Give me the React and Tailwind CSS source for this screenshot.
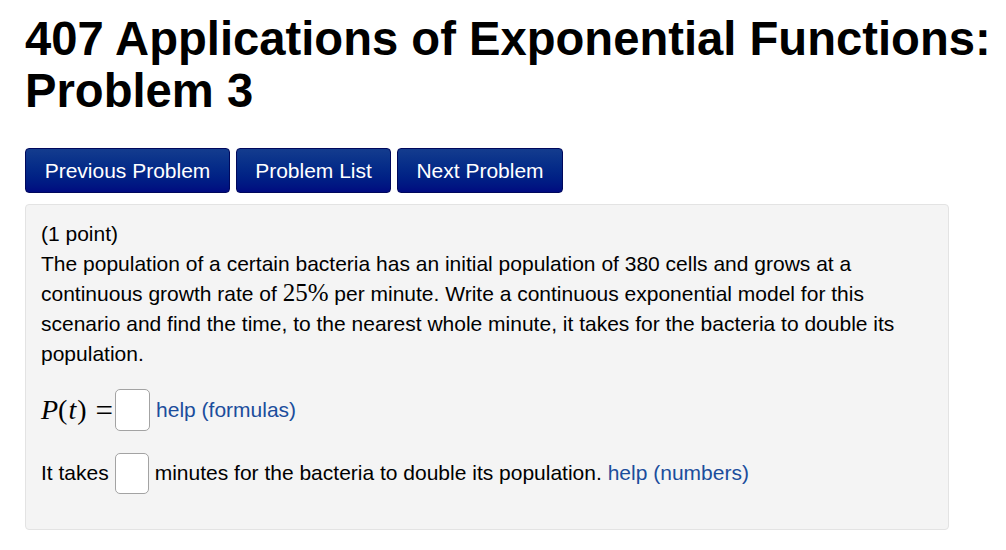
export default function App() {
  const btn =
    "h-[45px] flex items-center justify-center rounded-[4px] border border-[#00085c] bg-gradient-to-b from-[#143c8e] to-[#000a80] text-white text-[21px] leading-none";
  const serif = { fontFamily: '"Liberation Serif", "Times New Roman", serif' };
  return (
    <div
      className="bg-white min-h-[550px] pl-[25px] text-black"
      style={{ fontFamily: '"Liberation Sans", Arial, sans-serif' }}
    >
      <h1 className="pt-[13px] text-[47.2px] leading-[52px] font-bold">
        407 Applications of Exponential Functions:
        <br />
        Problem 3
      </h1>
      <div className="mt-[31px] flex gap-[6px]">
        <div className={`${btn} w-[205px]`}>Previous Problem</div>
        <div className={`${btn} w-[155px]`}>Problem List</div>
        <div className={`${btn} w-[166px]`}>Next Problem</div>
      </div>
      <div className="mt-[11px] w-[924px] h-[326px] rounded-[4px] border border-[#e3e3e3] bg-[#f4f4f4] pl-[15px] pr-[15px] pt-[14px] text-[21px] leading-[30px]">
        <div>(1 point)</div>
        <div>
          The population of a certain bacteria has an initial population of 380
          cells and grows at a continuous growth rate of{" "}
          <span className="text-[25px] leading-none" style={serif}>
            25%
          </span>{" "}
          per minute. Write a continuous exponential model for this scenario and
          find the time, to the nearest whole minute, it takes for the bacteria
          to double its population.
        </div>
        <div className="mt-[20px] flex items-center h-[42px]">
          <span className="text-[28px] leading-none flex items-center" style={serif}>
            <i>P</i>
            <span>(</span>
            <i className="ml-[1px]">t</i>
            <span className="ml-[1px]">)</span>
            <span className="ml-[9px] text-[31px]">=</span>
          </span>
          <span className="ml-[2px] w-[35px] h-[42px] rounded-[5px] border border-[#a3a3a3] bg-white" />
          <span className="ml-[6px] text-[#1b4d9c]">help (formulas)</span>
        </div>
        <div className="mt-[21px] flex items-center h-[42px]">
          <span>It takes</span>
          <span className="ml-[6px] w-[34px] h-[41px] rounded-[5px] border border-[#a3a3a3] bg-white" />
          <span className="ml-[6px]">
            minutes for the bacteria to double its population.{" "}
            <span className="text-[#1b4d9c]">help (numbers)</span>
          </span>
        </div>
      </div>
    </div>
  );
}
